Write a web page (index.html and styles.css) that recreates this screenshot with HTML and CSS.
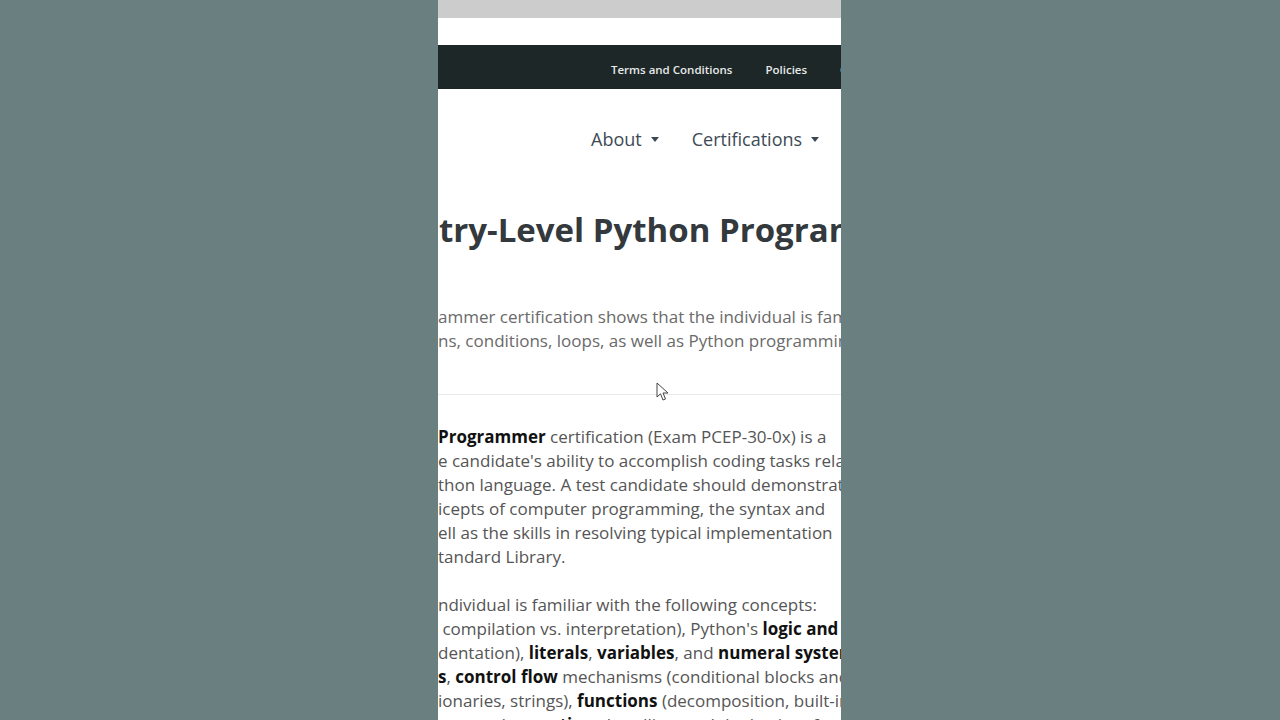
FILE: index.html
```html
<!DOCTYPE html>
<html lang="en">
<head>
<meta charset="utf-8">
<title>PCEP</title>
<link rel="stylesheet" href="styles.css">
</head>
<body>
<div class="stage">
  <div class="panel">
    <div class="browserbar"></div>
    <div class="whitegap"></div>
    <div class="topnav">
      <a class="toplink">Terms and Conditions</a>
      <a class="toplink">Policies</a>
      <a class="toplink">Contact</a>
    </div>
    <div class="mainnav">
      <span class="navitem">About <span class="caret"></span></span>
      <span class="navitem">Certifications <span class="caret"></span></span>
      <span class="navitem">Exams <span class="caret"></span></span>
    </div>
    <h1 class="title">try-Level Python Programmer</h1>
    <div class="lead">
      <span class="line">ammer certification shows that the individual is familiar</span>
      <span class="line">ns, conditions, loops, as well as Python programming</span>
    </div>
    <hr class="divider">
    <div class="body">
      <span class="line"><b>Programmer</b> certification (Exam PCEP-30-0x) is a</span>
      <span class="line">e candidate's ability to accomplish coding tasks related</span>
      <span class="line">thon language. A test candidate should demonstrate</span>
      <span class="line">icepts of computer programming, the syntax and</span>
      <span class="line">ell as the skills in resolving typical implementation</span>
      <span class="line">tandard Library.</span>
    </div>
    <div class="body second">
      <span class="line">ndividual is familiar with the following concepts:</span>
      <span class="line">&nbsp;compilation vs. interpretation), Python's <b>logic and</b></span>
      <span class="line">dentation), <b>literals</b>, <b>variables</b>, and <b>numeral systems</b></span>
      <span class="line"><b>s</b>, <b>control flow</b> mechanisms (conditional blocks and</span>
      <span class="line">ionaries, strings), <b>functions</b> (decomposition, built-in</span>
      <span class="line">ons, and <b>exceptions</b> handling, and the basics of</span>
    </div>
    <svg class="cursor" width="14" height="20" viewBox="0 0 14 20">
      <path d="M1 1 L1 15 L4.5 11.8 L7 18 L9.5 17 L7 11 L12 11 Z" fill="#fff" stroke="#444" stroke-width="1" stroke-linejoin="round"/>
    </svg>
  </div>
</div>
</body>
</html>
```
FILE: styles.css
```css
html, body {
  margin: 0;
  padding: 0;
}
body {
  background: #697f80;
  font-family: "Open Sans", "DejaVu Sans", sans-serif;
}
.stage {
  display: flex;
  justify-content: center;
  height: 720px;
  padding-right: 1px;
}
.panel {
  position: relative;
  width: 403px;
  height: 720px;
  overflow: hidden;
  background: #fff;
}
.browserbar {
  height: 18px;
  background: #cccccc;
}
.whitegap {
  height: 27px;
  background: #fff;
}
.topnav {
  box-sizing: border-box;
  height: 44px;
  padding-top: 4px;
  background: #1e2727;
  display: flex;
  align-items: center;
  gap: 33px;
  padding-left: 173px;
  white-space: nowrap;
}
.toplink {
  color: #e6e9e9;
  font-size: 11.5px;
  font-weight: 600;
  flex-shrink: 0;
}
.mainnav {
  display: flex;
  gap: 33px;
  padding-left: 153px;
  height: 100px;
  align-items: center;
  white-space: nowrap;
}
.navitem {
  flex-shrink: 0;
  color: #3d4a55;
  font-size: 18px;
  display: inline-flex;
  align-items: center;
  gap: 9px;
}
.caret {
  width: 0;
  height: 0;
  border-left: 4.5px solid transparent;
  border-right: 4.5px solid transparent;
  border-top: 5px solid #3d4a55;
}
.title {
  margin: 21px 0 0 1px;
  font-size: 33px;
  font-weight: 700;
  color: #33393d;
  white-space: nowrap;
  line-height: 40px;
}
.lead {
  margin-top: 55px;
  color: #6a6a6a;
  font-size: 17px;
  line-height: 24px;
}
.line {
  display: block;
  white-space: nowrap;
}
.divider {
  border: 0;
  border-top: 1px solid #e9e9e9;
  margin: 41px 0 0 0;
}
.body {
  margin-top: 30px;
  color: #555;
  font-size: 17px;
  line-height: 24px;
}
.body b {
  color: #111;
  font-weight: 700;
}
.body.second {
  margin-top: 24px;
}
.cursor {
  position: absolute;
  left: 218px;
  top: 382px;
}
```
